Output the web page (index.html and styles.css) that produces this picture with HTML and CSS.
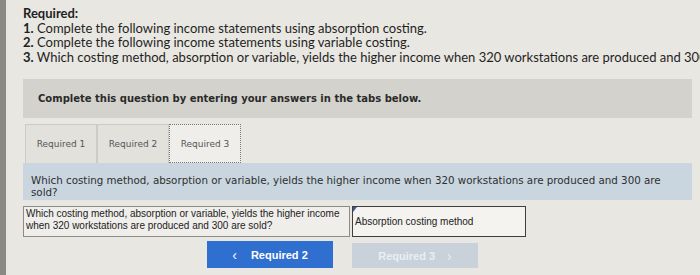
FILE: index.html
```html
<!DOCTYPE html>
<html>
<head>
<meta charset="utf-8">
<link rel="stylesheet" href="styles.css">
</head>
<body>
<div class="page">
  <div class="required">
    <div class="req-title">Required:</div>
    <div class="req-line"><b>1.</b> Complete the following income statements using absorption costing.</div>
    <div class="req-line"><b>2.</b> Complete the following income statements using variable costing.</div>
    <div class="req-line"><b>3.</b> Which costing method, absorption or variable, yields the higher income when 320 workstations are produced and 300 are sold?</div>
  </div>
  <div class="instr">Complete this question by entering your answers in the tabs below.</div>
  <div class="tabs">
    <div class="tab">Required 1</div>
    <div class="tab">Required 2</div>
    <div class="tab active">Required 3</div>
  </div>
  <div class="question">Which costing method, absorption or variable, yields the higher income when 320 workstations are produced and 300 are sold?</div>
  <div class="answer-row">
    <div class="cell-q">Which costing method, absorption or variable, yields the higher income when 320 workstations are produced and 300 are sold?</div>
    <div class="cell-a"><span class="corner"></span>Absorption costing method</div>
  </div>
  <div class="nav">
    <div class="btn prev"><span class="chev">&lsaquo;</span>Required 2</div>
    <div class="btn next">Required 3<span class="chev">&rsaquo;</span></div>
  </div>
</div>
</body>
</html>
```
FILE: styles.css
```css
html, body {
  margin: 0;
  padding: 0;
  width: 700px;
  height: 275px;
  overflow: hidden;
  background: #e9e7e2;
}
.page {
  border-left: 6px solid #8a8986;
  height: 275px;
  box-sizing: border-box;
  padding: 6px 8px 0 17px;
  background: #e9e7e2;
}
.required {
  font-family: Lato, "Open Sans", sans-serif;
  font-size: 13px;
  line-height: 14.5px;
  color: #1f1f1f;
  white-space: nowrap;
  overflow: hidden;
  margin-right: -8px;
}
.req-title {
  font-weight: bold;
}
.req-line b {
  font-weight: bold;
}
.instr {
  margin-top: 15px;
  background: #d3d2cc;
  height: 39px;
  display: flex;
  align-items: center;
  padding-left: 15px;
  font-family: "DejaVu Sans", Verdana, sans-serif;
  font-weight: bold;
  font-size: 10px;
  color: #2a2a2a;
}
.tabs {
  display: flex;
  margin-top: 6px;
  padding-left: 2px;
  height: 39px;
}
.tab {
  width: 70px;
  border: 1px solid #cdcbc5;
  border-bottom: none;
  background: #e3e1dc;
  display: flex;
  align-items: center;
  justify-content: center;
  font-family: "DejaVu Sans", Verdana, sans-serif;
  font-size: 9px;
  color: #555;
}
.tab.active {
  border: 1px dotted #777;
  background: #efeeea;
  width: 70px;
}
.question {
  background: #c9d6df;
  height: 37px;
  box-sizing: border-box;
  padding: 11px 30px 0 8px;
  font-family: "DejaVu Sans", Verdana, sans-serif;
  font-size: 10.3px;
  line-height: 12px;
  color: #2e2e2e;
}
.answer-row {
  display: flex;
  margin-top: 6px;
  height: 31px;
  gap: 2px;
}
.cell-q {
  width: 327px;
  box-sizing: border-box;
  border: 1px solid #8d8c88;
  background: #efeeea;
  padding: 1px 2px;
  font-family: "Liberation Sans", Arial, sans-serif;
  font-size: 10px;
  line-height: 12px;
  color: #222;
}
.cell-a {
  position: relative;
  width: 174px;
  box-sizing: border-box;
  border: 1.5px solid #3f3f3f;
  background: #f4f3ef;
  display: flex;
  align-items: center;
  padding-left: 2px;
  font-family: "Liberation Sans", Arial, sans-serif;
  font-size: 10px;
  color: #222;
}
.corner {
  position: absolute;
  left: 0;
  top: 0;
  width: 0;
  height: 0;
  border-top: 5px solid #3a5a9a;
  border-right: 4px solid transparent;
}
.nav {
  display: flex;
  margin-top: 4px;
  padding-left: 184px;
  gap: 19px;
  align-items: flex-start;
}
.btn {
  width: 126px;
  height: 27px;
  display: flex;
  align-items: center;
  justify-content: center;
  font-family: "Liberation Sans", Arial, sans-serif;
  font-weight: bold;
  font-size: 11px;
}
.btn.prev {
  background: #2f6fd0;
  color: #fff;
}
.btn.prev .chev {
  margin-right: 14px;
  font-size: 14px;
  font-weight: normal;
}
.btn.next {
  margin-top: 2px;
  height: 25px;
  background: #c9d2da;
  color: #e9eef3;
}
.btn.next .chev {
  margin-left: 12px;
  font-size: 14px;
  font-weight: normal;
}
```
